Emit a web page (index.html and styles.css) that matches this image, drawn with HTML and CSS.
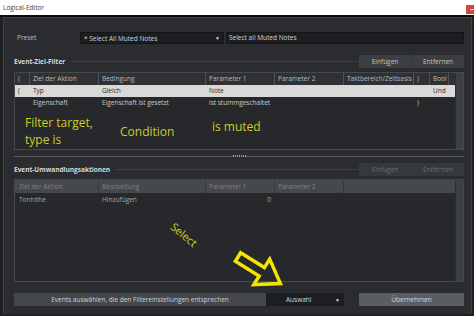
FILE: index.html
```html
<!DOCTYPE html>
<html>
<head>
<meta charset="utf-8">
<link rel="stylesheet" href="styles.css">
</head>
<body>
<div class="window">
  <div class="titlebar">
    <span class="title">Logical-Editor</span>
    <span class="close"><span class="close-dash"></span></span>
  </div>
  <div class="dialog">
    <div class="preset-row">
      <span class="preset-label">Preset</span>
      <div class="dropdown preset-dd"><span>* Select All Muted Notes</span><span class="caret">▼</span></div>
      <div class="textfield">Select all Muted Notes</div>
    </div>

    <div class="section-head">
      <span class="section-title">Event-Ziel-Filter</span>
      <span class="rule"></span>
      <div class="btn-group"><span class="btn">Einfügen</span><span class="btn">Entfernen</span></div>
    </div>

    <div class="table table1">
      <div class="table-body">
        <div class="grid1 head">
          <span class="cell">(</span>
          <span class="cell">Ziel der Aktion</span>
          <span class="cell">Bedingung</span>
          <span class="cell">Parameter 1</span>
          <span class="cell">Parameter 2</span>
          <span class="cell">Taktbereich/Zeitbasis</span>
          <span class="cell">)</span>
          <span class="cell">Bool</span>
          <span class="cell last"></span>
        </div>
        <div class="grid1 row selected">
          <span class="cell">(</span>
          <span class="cell">Typ</span>
          <span class="cell">Gleich</span>
          <span class="cell">Note</span>
          <span class="cell"></span>
          <span class="cell"></span>
          <span class="cell"></span>
          <span class="cell">Und</span>
          <span class="cell"></span>
        </div>
        <div class="grid1 row">
          <span class="cell"></span>
          <span class="cell">Eigenschaft</span>
          <span class="cell">Eigenschaft ist gesetzt</span>
          <span class="cell">ist stummgeschaltet</span>
          <span class="cell"></span>
          <span class="cell"></span>
          <span class="cell">)</span>
          <span class="cell"></span>
          <span class="cell"></span>
        </div>
      </div>
      <div class="scrollbar"></div>
      <span class="note note-target">Filter target,<br>type is</span>
      <span class="note note-cond">Condition</span>
      <span class="note note-muted">is muted</span>
    </div>

    <div class="splitter"><span class="split-line"></span><span class="split-dots"></span><span class="split-line"></span></div>

    <div class="section-head section2">
      <span class="section-title">Event-Umwandlungsaktionen</span>
      <span class="rule"></span>
      <div class="btn-group disabled"><span class="btn">Einfügen</span><span class="btn">Entfernen</span></div>
    </div>

    <div class="table table2">
      <div class="table-body">
        <div class="grid2 head2">
          <span class="cell">Ziel der Aktion</span>
          <span class="cell">Bearbeitung</span>
          <span class="cell">Parameter 1</span>
          <span class="cell">Parameter 2</span>
          <span class="cell last"></span>
        </div>
        <div class="grid2 row dim">
          <span class="cell">Tonhöhe</span>
          <span class="cell">Hinzufügen</span>
          <span class="cell num">0</span>
          <span class="cell"></span>
          <span class="cell"></span>
        </div>
      </div>
      <div class="scrollbar"></div>
      <span class="note note-select">Select</span>
    </div>

    <div class="bottom-row">
      <span class="wide-btn">Events auswählen, die den Filtereinstellungen entsprechen</span>
      <div class="dropdown mode-dd"><span class="mode-text">Auswahl</span><span class="caret">▼</span></div>
      <span class="apply-btn">Übernehmen</span>
    </div>
  </div>

  <svg class="arrow" width="474" height="316" viewBox="0 0 474 316">
    <polygon transform="translate(238 257) rotate(32)" points="0,-5 28,-5 28,-15 50,0 28,15 28,5 0,5" fill="none" stroke="#f3e500" stroke-width="3.5" stroke-linejoin="miter"/>
  </svg>
</div>
</body>
</html>
```

FILE: styles.css
```css
* { box-sizing: border-box; }

html, body {
  margin: 0;
  padding: 0;
  background: #1e2023;
}

body {
  width: 474px;
  height: 316px;
  overflow: hidden;
  font-family: "Open Sans", "Noto Sans", sans-serif;
  font-size: 6.5px;
  color: #c9cbce;
}

.window {
  position: relative;
  width: 474px;
  height: 316px;
  background: #1e2023;
}

.titlebar {
  height: 17px;
  background: #ffffff;
  border-bottom: 2px solid #0b0b0c;
  display: flex;
  align-items: flex-start;
  padding-left: 3px;
}

.title {
  color: #3a3a3a;
  line-height: 15px;
  font-size: 6.5px;
}

.close {
  margin-left: auto;
  margin-top: 5px;
  width: 8px;
  height: 9px;
  background: #d64541;
  display: flex;
  align-items: center;
  justify-content: flex-end;
}

.close-dash {
  width: 4px;
  height: 1px;
  background: #f4d0cf;
}

.dialog {
  height: 297px;
  margin: 0 2px 0 3px;
  background: #2a2c30;
  border: 1px solid #3e4145;
  border-bottom-color: #2a2c30;
  padding: 0 7px 0 10px;
  display: flex;
  flex-direction: column;
}

/* Preset row */
.preset-row {
  margin-top: 14px;
  height: 12px;
  display: flex;
  align-items: stretch;
}

.preset-label {
  width: 66px;
  padding-left: 3px;
  line-height: 12px;
  color: #b9bcc0;
}

.dropdown {
  background: #1b1d20;
  border: 1px solid #141517;
  display: flex;
  align-items: center;
  color: #d2d4d6;
}

.preset-dd {
  width: 144px;
  padding: 0 3px 0 3px;
  justify-content: space-between;
}

.caret {
  font-size: 5px;
  color: #d8d8d8;
}

.textfield {
  flex: 1;
  margin-left: 2px;
  background: #1b1d20;
  border: 1px solid #141517;
  padding-left: 2px;
  line-height: 10px;
  color: #d2d4d6;
}

/* Section header */
.section-head {
  margin-top: 11px;
  height: 13px;
  display: flex;
  align-items: center;
}

.section2 {
  margin-top: 6px;
}

.section-title {
  font-weight: 700;
  color: #d6d8da;
}

.rule {
  flex: 1;
  height: 1px;
  background: #3b3e42;
  margin: 0 0 0 5px;
}

.btn-group {
  width: 105px;
  height: 13px;
  display: flex;
  background: #3b3e42;
}

.btn {
  flex: 1;
  text-align: center;
  line-height: 13px;
  color: #c4c6c9;
}

.btn + .btn {
  border-left: 1px solid #34373b;
}

.btn-group.disabled {
  background: #35383c;
}

.btn-group.disabled .btn {
  color: #6b6e72;
}

/* Tables */
.table {
  position: relative;
  border: 1px solid #45484c;
  background: #26282b;
  display: flex;
}

.table1 {
  margin-top: 4px;
  height: 78px;
}

.table2 {
  margin-top: 3px;
  height: 103px;
}

.table-body {
  flex: 1;
  display: flex;
  flex-direction: column;
}

.scrollbar {
  width: 8px;
  background: #3d4044;
  border-left: 1px solid #2c2e31;
}

.grid1 {
  display: grid;
  grid-template-columns: 15px 69px 107px 69px 69px 70px 16px 19px 1fr;
  height: 12px;
}

.grid2 {
  display: grid;
  grid-template-columns: 84px 107px 69px 69px 1fr;
  height: 12px;
}

.cell {
  padding-left: 3px;
  line-height: 12px;
  white-space: nowrap;
  overflow: hidden;
}

.head {
  background: #2f3135;
  color: #b8bbbf;
}

.head .cell {
  border-right: 1px solid #505357;
}

.head .cell.last,
.head2 .cell.last {
  border-right: none;
}

.row {
  color: #c8cacd;
}

.row.selected {
  background: #d9d9d9;
  color: #2a2a2a;
}

.head2 {
  height: 13px;
  background: #45484d;
  color: #7f8287;
}

.head2 .cell {
  line-height: 13px;
  border-right: 1px solid #36393d;
}

.head2 .cell:first-child {
  padding-left: 4px;
}

.row.dim {
  color: #a3a6aa;
  margin-top: 1px;
}

.row.dim .cell:first-child {
  padding-left: 4px;
}

.cell.num {
  text-align: right;
  padding-right: 4px;
}

/* Annotations */
.note {
  position: absolute;
  color: #d0cc28;
  font-size: 12px;
  line-height: 17px;
  white-space: nowrap;
}

.note-target {
  left: 10px;
  top: 41px;
}

.note-cond {
  left: 105px;
  top: 50px;
}

.note-muted {
  left: 197px;
  top: 45px;
}

.note-select {
  left: 154px;
  top: 46px;
  font-size: 11px;
  transform: rotate(40deg);
}

/* Splitter */
.splitter {
  margin-top: 5px;
  height: 2px;
  display: flex;
  align-items: center;
}

.split-line {
  flex: 1;
  height: 1px;
  background: #5b5e62;
}

.split-dots {
  width: 13px;
  height: 2px;
  background: repeating-linear-gradient(90deg, #9a9da1 0 1px, transparent 1px 2px);
}

/* Bottom row */
.bottom-row {
  margin-top: 11px;
  height: 13px;
  display: flex;
}

.wide-btn {
  width: 252px;
  background: #44474c;
  color: #cfd1d4;
  text-align: center;
  line-height: 13px;
}

.mode-dd {
  width: 78px;
  border: none;
  background: #1c1e21;
  padding: 0 4px 0 20px;
  justify-content: space-between;
}

.apply-btn {
  margin-left: auto;
  width: 105px;
  background: #5a5d62;
  color: #d8dadc;
  text-align: center;
  line-height: 13px;
  border-radius: 1px;
}

.arrow {
  position: absolute;
  left: 0;
  top: 0;
  pointer-events: none;
}
```
